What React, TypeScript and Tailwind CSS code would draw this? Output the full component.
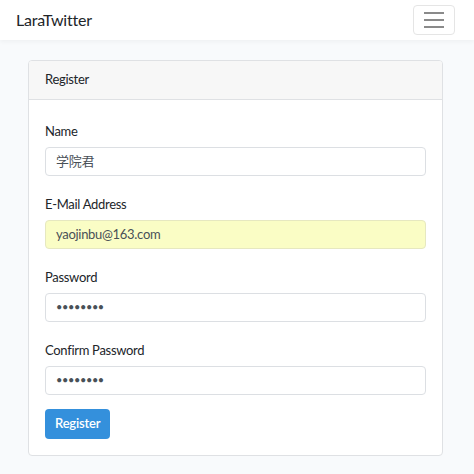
const FIELDS = [
  { label: "Name", value: "学院君", autofill: false, secret: false },
  { label: "E-Mail Address", value: "yaojinbu@163.com", autofill: true, secret: false },
  { label: "Password", value: "••••••••", autofill: false, secret: true },
  { label: "Confirm Password", value: "••••••••", autofill: false, secret: true },
];

function Field({
  label,
  value,
  autofill,
  secret,
  last,
}: {
  label: string;
  value: string;
  autofill: boolean;
  secret: boolean;
  last: boolean;
}) {
  return (
    <div className={last ? "mb-[14px]" : "mb-[17px]"}>
      <p className="mb-[6px] h-[21px] text-[13px] leading-[22px] tracking-[-0.3px] text-[#212529]">{label}</p>
      <div
        className={`flex h-[29px] items-center rounded-[4px] border px-[10px] text-[#495057] ${
          autofill ? "border-[#e6e8c0] bg-[#fafdc5]" : "border-[#dcdfe3] bg-white"
        } ${secret ? "text-[11px] tracking-[-0.4px]" : "text-[13px] tracking-[-0.3px]"}`}
      >
        {value}
      </div>
    </div>
  );
}

export default function App() {
  return (
    <div
      className="min-h-[474px] bg-[#f8fafc]"
      style={{ fontFamily: '"Lato", "Noto Sans", "Noto Sans CJK SC", sans-serif' }}
    >
      <nav className="flex h-10 items-center justify-between bg-white pl-4 pr-[19px] shadow-[0_2px_4px_rgba(0,0,0,0.04)]">
        <span className="text-[16px] tracking-[-0.2px] text-[#212529]">LaraTwitter</span>
        <button className="flex h-[30px] w-[42px] flex-col items-center justify-center gap-[5px] rounded-[4px] border border-[#e5e5e5]">
          <span className="h-[2px] w-[20px] bg-[#8a8a8a]" />
          <span className="h-[2px] w-[20px] bg-[#8a8a8a]" />
          <span className="h-[2px] w-[20px] bg-[#8a8a8a]" />
        </button>
      </nav>

      <main className="pl-[28px] pr-[31px] pt-5">
        <div className="overflow-hidden rounded-[4px] border border-[#dfe1e4] bg-white">
          <div className="flex h-[39px] items-center border-b border-[#dfe1e4] bg-[#f7f7f7] px-4 text-[13px] tracking-[-0.3px] text-[#212529]">
            Register
          </div>
          <div className="px-4 pb-4 pt-5">
            {FIELDS.map((f, i) => (
              <Field key={f.label} {...f} last={i === FIELDS.length - 1} />
            ))}
            <button className="h-[30px] rounded-[4px] bg-[#3490dc] px-[10px] text-[13px] font-semibold tracking-[-0.2px] text-white">
              Register
            </button>
          </div>
        </div>
      </main>
    </div>
  );
}
